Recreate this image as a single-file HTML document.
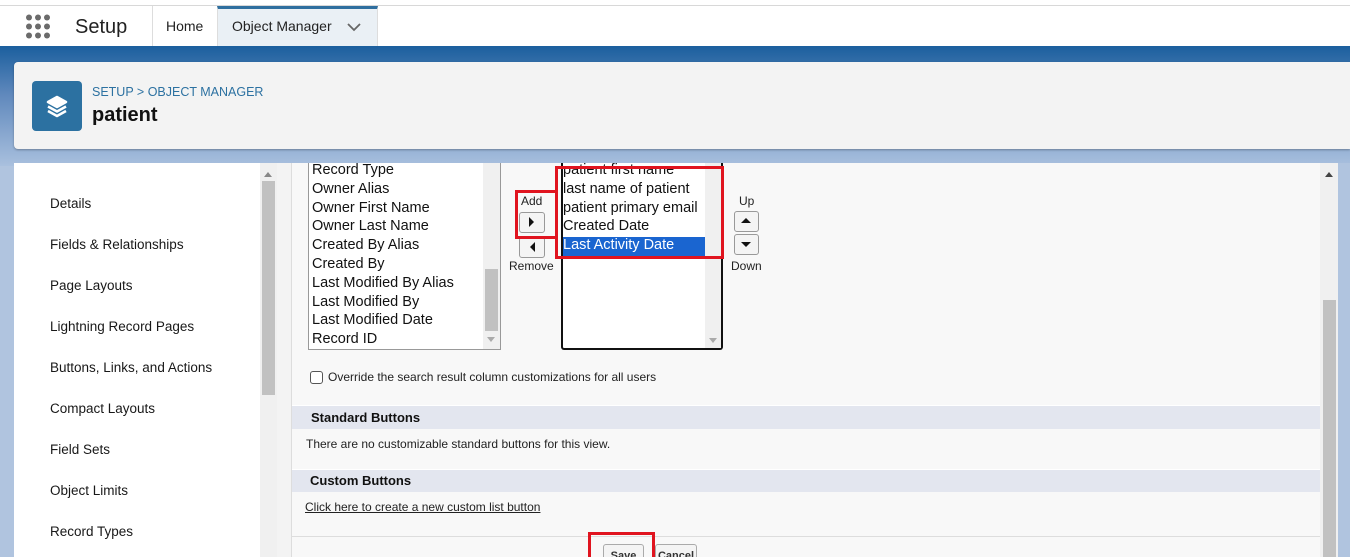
<!DOCTYPE html>
<html><head><style>
*{box-sizing:border-box;margin:0;padding:0}
html,body{width:1350px;height:557px;overflow:hidden}
body{font-family:"Liberation Sans",Arial,sans-serif;background:#b0c4df;position:relative}
.abs{position:absolute}
.top{left:0;top:5px;width:1350px;height:41px;background:#fff;border-top:1px solid #d8d8d8}
.band{left:0;top:46px;width:1350px;height:120px;background:linear-gradient(#1b5f9e,#5f88bc 40%,#a9c0de)}
.lst{font-size:14.5px;color:#111;line-height:18.8px}
</style></head><body>
<div class="abs" style="left:0;top:0;width:1350px;height:5px;background:#fff"></div>
<div class="abs top">
 <svg class="abs" style="left:25px;top:8px" width="26" height="26"><g fill="#6b6b6b">
 <circle cx="4" cy="3.5" r="3"/><circle cx="13" cy="3.5" r="3"/><circle cx="22" cy="3.5" r="3"/>
 <circle cx="4" cy="12.5" r="3"/><circle cx="13" cy="12.5" r="3"/><circle cx="22" cy="12.5" r="3"/>
 <circle cx="4" cy="21.5" r="3"/><circle cx="13" cy="21.5" r="3"/><circle cx="22" cy="21.5" r="3"/></g></svg>
 <div class="abs" style="left:75px;top:10px;font-size:20px;color:#222">Setup</div>
 <div class="abs" style="left:152px;top:0;width:1px;height:40px;background:#ddd"></div>
 <div class="abs" style="left:166px;top:12px;font-size:14px;color:#222">Home</div>
 <div class="abs" style="left:217px;top:0;width:161px;height:40px;background:#eaf0f5;border-top:3px solid #2f6f9f;border-left:1px solid #ddd;border-right:1px solid #ddd"></div>
 <div class="abs" style="left:232px;top:12px;font-size:14px;color:#222">Object Manager</div>
 <svg class="abs" style="left:347px;top:17px" width="14" height="9"><path d="M1 1l6 6 6-6" stroke="#666" stroke-width="1.8" fill="none"/></svg>
</div>
<div class="abs band"></div>
<div class="abs" style="left:14px;top:62px;width:1336px;height:87px;background:#f3f3f3;border-radius:4px 0 0 4px;box-shadow:0 1px 2px rgba(0,0,0,.3)"></div>
<div class="abs" style="left:32px;top:81px;width:50px;height:50px;background:#2c71a1;border-radius:4px"></div>
<svg class="abs" style="left:45px;top:94px" width="24" height="24"><g fill="none" stroke="#fff" stroke-width="2.5" stroke-linejoin="round"><path d="M12 3l9 5-9 5-9-5z" fill="#fff"/><path d="M3 12.5l9 5 9-5"/><path d="M3 17l9 5 9-5"/></g></svg>
<div class="abs" style="left:92px;top:85px;font-size:12.5px;color:#2c71a1">SETUP &gt; OBJECT MANAGER</div>
<div class="abs" style="left:92px;top:104px;font-size:20px;font-weight:bold;color:#111">patient</div>
<!-- left panel -->
<div class="abs" style="left:14px;top:163px;width:263px;height:394px;background:#fff"></div>
<div class="abs" style="left:260px;top:163px;width:17px;height:394px;background:#f0f0f0"></div>
<div class="abs" style="left:262px;top:181px;width:13px;height:214px;background:#c1c1c1"></div>
<div class="abs" style="left:264px;top:172px;width:0;height:0;border:4px solid transparent;border-bottom:5px solid #888;border-top:0"></div>
<div class="abs" style="left:50px;top:183px;font-size:13.5px;color:#181818;line-height:41px">Details<br>Fields &amp; Relationships<br>Page Layouts<br>Lightning Record Pages<br>Buttons, Links, and Actions<br>Compact Layouts<br>Field Sets<br>Object Limits<br>Record Types</div>
<div class="abs" style="left:277px;top:163px;width:14px;height:394px;background:#f3f3f3"></div>
<!-- main -->
<div class="abs" style="left:291px;top:163px;width:1030px;height:394px;background:#f8f8f8;border-left:1px solid #ddd"></div>
<div class="abs" style="left:1320px;top:163px;width:18px;height:394px;background:#f0f0f0"></div>
<div class="abs" style="left:1323px;top:300px;width:13px;height:257px;background:#c1c1c1"></div>
<div class="abs" style="left:1325px;top:172px;width:0;height:0;border:4px solid transparent;border-bottom:5px solid #444;border-top:0"></div>
<div class="abs" style="left:1338px;top:163px;width:12px;height:394px;background:#b0c4df"></div>
<!-- left list -->
<div class="abs" style="left:308px;top:163px;width:193px;height:187px;background:#fff;border:1px solid #999;border-top:0"></div>
<div class="abs" style="left:483px;top:163px;width:17px;height:186px;background:#f0f0f0"></div>
<div class="abs" style="left:485px;top:269px;width:13px;height:62px;background:#c1c1c1"></div>
<div class="abs" style="left:487px;top:337px;border:4px solid transparent;border-top:5px solid #aaa;border-bottom:0"></div>
<div class="abs lst" style="left:312px;top:161px">Record Type<br>Owner Alias<br>Owner First Name<br>Owner Last Name<br>Created By Alias<br>Created By<br>Last Modified By Alias<br>Last Modified By<br>Last Modified Date<br>Record ID</div>
<!-- add/remove -->
<div class="abs" style="left:521px;top:194px;font-size:12px;color:#222">Add</div>
<div class="abs" style="left:519px;top:212px;width:26px;height:21px;border:1px solid #999;border-radius:3px;background:#f4f4f4"></div>
<div class="abs" style="left:529px;top:217px;border:5px solid transparent;border-left:5px solid #111;border-right:0"></div>
<div class="abs" style="left:519px;top:237px;width:26px;height:21px;border:1px solid #999;border-radius:3px;background:#f4f4f4"></div>
<div class="abs" style="left:530px;top:242px;border:5px solid transparent;border-right:5px solid #111;border-left:0"></div>
<div class="abs" style="left:509px;top:259px;font-size:12px;color:#222">Remove</div>
<!-- right list -->
<div class="abs" style="left:561px;top:163px;width:162px;height:187px;background:#fff;border:2px solid #111;border-top:0;border-radius:0 0 3px 3px"></div>
<div class="abs" style="left:705px;top:163px;width:16px;height:185px;background:#f0f0f0"></div>
<div class="abs" style="left:709px;top:338px;border:4px solid transparent;border-top:5px solid #aaa;border-bottom:0"></div>
<div class="abs" style="left:563px;top:237px;width:142px;height:19px;background:#1a65d0"></div>
<div class="abs" style="left:561px;top:163px;width:162px;height:100px;overflow:hidden"><div class="abs lst" style="left:2px;top:-2px">patient first name<br>last name of patient<br>patient primary email<br>Created Date<br><span style="color:#fff">Last Activity Date</span></div></div>
<div class="abs" style="left:555px;top:166px;width:169px;height:93px;border:3px solid #e0141f"></div>
<div class="abs" style="left:515px;top:190px;width:41px;height:49px;border:3px solid #e0141f;border-right:0"></div>
<!-- up/down -->
<div class="abs" style="left:739px;top:194px;font-size:12px;color:#222">Up</div>
<div class="abs" style="left:734px;top:211px;width:25px;height:21px;border:1px solid #999;border-radius:3px;background:#f4f4f4"></div>
<div class="abs" style="left:741px;top:218px;border:5px solid transparent;border-bottom:5px solid #111;border-top:0"></div>
<div class="abs" style="left:734px;top:234px;width:25px;height:21px;border:1px solid #999;border-radius:3px;background:#f4f4f4"></div>
<div class="abs" style="left:741px;top:242px;border:5px solid transparent;border-top:5px solid #111;border-bottom:0"></div>
<div class="abs" style="left:731px;top:259px;font-size:12px;color:#222">Down</div>
<!-- checkbox -->
<div class="abs" style="left:310px;top:371px;width:13px;height:13px;border:1px solid #555;border-radius:3px;background:#fff"></div>
<div class="abs" style="left:328px;top:370px;font-size:12px;color:#222">Override the search result column customizations for all users</div>
<div class="abs" style="left:292px;top:405px;width:1028px;height:1px;background:#fff"></div>
<div class="abs" style="left:292px;top:406px;width:1028px;height:23px;background:#e3e6ef"></div>
<div class="abs" style="left:311px;top:410px;font-size:13px;font-weight:bold;color:#111">Standard Buttons</div>
<div class="abs" style="left:306px;top:437px;font-size:12px;color:#222">There are no customizable standard buttons for this view.</div>
<div class="abs" style="left:292px;top:469px;width:1028px;height:23px;background:#e3e6ef;border-top:1px solid #fff"></div>
<div class="abs" style="left:310px;top:473px;font-size:13px;font-weight:bold;color:#111">Custom Buttons</div>
<div class="abs" style="left:305px;top:500px;font-size:12px;color:#222;text-decoration:underline">Click here to create a new custom list button</div>
<div class="abs" style="left:292px;top:536px;width:1028px;height:1px;background:#ddd"></div>
<div class="abs" style="left:603px;top:544px;width:41px;height:20px;border:1px solid #aaa;border-radius:3px;background:#f4f4f4;font-size:11px;font-weight:bold;color:#333;text-align:center;padding-top:5px">Save</div>
<div class="abs" style="left:655px;top:544px;width:42px;height:20px;border:1px solid #aaa;border-radius:3px;background:#f4f4f4;font-size:11px;font-weight:bold;color:#333;text-align:center;padding-top:5px">Cancel</div>
<div class="abs" style="left:588px;top:532px;width:67px;height:30px;border:3px solid #e0141f"></div>
</body></html>
